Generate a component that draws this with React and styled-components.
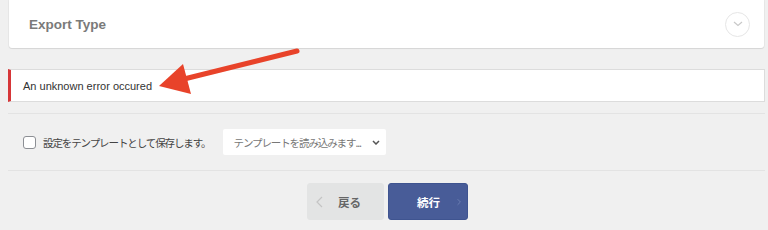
import React from "react";
import styled, { createGlobalStyle } from "styled-components";

const Global = createGlobalStyle`
  html, body { margin: 0; padding: 0; background: #f0f0f0; }
  body { font-family: "Liberation Sans", Arial, "Noto Sans CJK JP", sans-serif; }
`;

const Page = styled.div`
  position: relative;
  width: 757px;
  margin-left: 8px;
  height: 230px;
  overflow: hidden;
`;

const Card = styled.div`
  margin: 0 1px;
  height: 48px;
  background: #fff;
  border-radius: 0 0 3px 3px;
  box-shadow: 0 1px 1px rgba(0,0,0,0.08), 0 0 0 1px rgba(0,0,0,0.03);
  display: flex;
  align-items: center;
  justify-content: space-between;
  padding: 0 14px 0 20px;
  box-sizing: border-box;
`;

const CardTitle = styled.div`
  font-size: 13.5px;
  font-weight: bold;
  color: #7a7a7a;
  margin-top: 1px;
`;

const CircleToggle = styled.div`
  width: 23px;
  height: 23px;
  border: 1px solid #e6e6e6;
  border-radius: 50%;
  display: flex;
  align-items: center;
  justify-content: center;
`;

const Notice = styled.div`
  margin-top: 21px;
  height: 33px;
  box-sizing: border-box;
  background: #fff;
  border: 1px solid #dcdcdc;
  border-left: 3px solid #d63638;
  display: flex;
  align-items: center;
  padding-left: 12px;
  font-size: 11px;
  color: #333;
`;

const OptionsRow = styled.div`
  margin-top: 11px;
  border-top: 1px solid #e3e3e3;
  border-bottom: 1px solid #e3e3e3;
  height: 58px;
  box-sizing: border-box;
  display: flex;
  align-items: center;
  padding: 0 0 0 15px;
`;

const CheckLabel = styled.label`
  display: flex;
  align-items: center;
  gap: 7px;
  font-size: 10.5px;
  letter-spacing: -1.1px;
  white-space: nowrap;
  color: #444;
  font-family: "Noto Sans CJK JP", sans-serif;
`;

const Box = styled.span`
  width: 11px;
  height: 11px;
  border: 1px solid #8c8f94;
  border-radius: 3px;
  background: #fff;
`;

const Select = styled.div`
  margin-left: 12px;
  width: 163px;
  height: 26px;
  flex-shrink: 0;
  box-sizing: border-box;
  background: #fff;
  border-radius: 2px;
  display: flex;
  align-items: center;
  justify-content: space-between;
  padding: 0 6px 0 11px;
  font-size: 10.5px;
  letter-spacing: -1.1px;
  white-space: nowrap;
  color: #777;
  font-family: "Noto Sans CJK JP", sans-serif;
`;

const ButtonRow = styled.div`
  display: flex;
  justify-content: center;
  gap: 4px;
  padding-top: 12px;
  padding-left: 2px;
`;

const NavButton = styled.div`
  width: ${p => p.$w}px;
  height: 37px;
  flex-shrink: 0;
  box-sizing: border-box;
  border-radius: 3px;
  background: ${p => (p.$primary ? "#485c98" : "#e3e4e4")};
  border: 1px solid ${p => (p.$primary ? "#3f5490" : "#e3e4e4")};
  color: ${p => (p.$primary ? "#fff" : "#666")};
  display: flex;
  align-items: center;
  padding: ${p => (p.$primary ? "0 6px 0 28px" : "0 0 0 8px")};
  font-size: 11.5px;
  font-weight: bold;
  white-space: nowrap;
  font-family: "Noto Sans CJK JP", sans-serif;
`;

const ButtonLabel = styled.span`
  margin: ${p => p.$m};
`;

const Arrow = styled.svg`
  position: absolute;
  left: 0;
  top: 0;
  pointer-events: none;
`;

export default function App() {
  return (
    <>
      <Global />
      <Page>
        <Card>
          <CardTitle>Export Type</CardTitle>
          <CircleToggle>
            <svg width="10" height="6" viewBox="0 0 10 6">
              <path d="M1 1 L5 4.5 L9 1" fill="none" stroke="#c8c8c8" strokeWidth="1.2" />
            </svg>
          </CircleToggle>
        </Card>
        <Notice>An unknown error occured</Notice>
        <OptionsRow>
          <CheckLabel>
            <Box />
            設定をテンプレートとして保存します。
          </CheckLabel>
          <Select>
            <span>テンプレートを読み込みます...</span>
            <svg width="8" height="5" viewBox="0 0 8 5">
              <path d="M1 1 L4 4 L7 1" fill="none" stroke="#555" strokeWidth="1.5" />
            </svg>
          </Select>
        </OptionsRow>
        <ButtonRow>
          <NavButton $w={77}>
            <svg width="7" height="12" viewBox="0 0 7 12">
              <path d="M6 1 L1 6 L6 11" fill="none" stroke="#c4c4c4" strokeWidth="1.2" />
            </svg>
            <ButtonLabel $m="0 0 0 15px">戻る</ButtonLabel>
          </NavButton>
          <NavButton $w={80} $primary>
            <ButtonLabel $m="0 17px 0 0">続行</ButtonLabel>
            <svg width="7" height="12" viewBox="0 0 7 12">
              <path d="M1 1 L6 6 L1 11" fill="none" stroke="#7b8cbd" strokeWidth="1.2" />
            </svg>
          </NavButton>
        </ButtonRow>
        <Arrow width="757" height="230" viewBox="8 0 757 230">
          <line x1="297" y1="51" x2="180" y2="80" stroke="#e8432a" strokeWidth="5" strokeLinecap="round" />
          <polygon points="159,86 183,64 191,94" fill="#e8432a" />
        </Arrow>
      </Page>
    </>
  );
}
